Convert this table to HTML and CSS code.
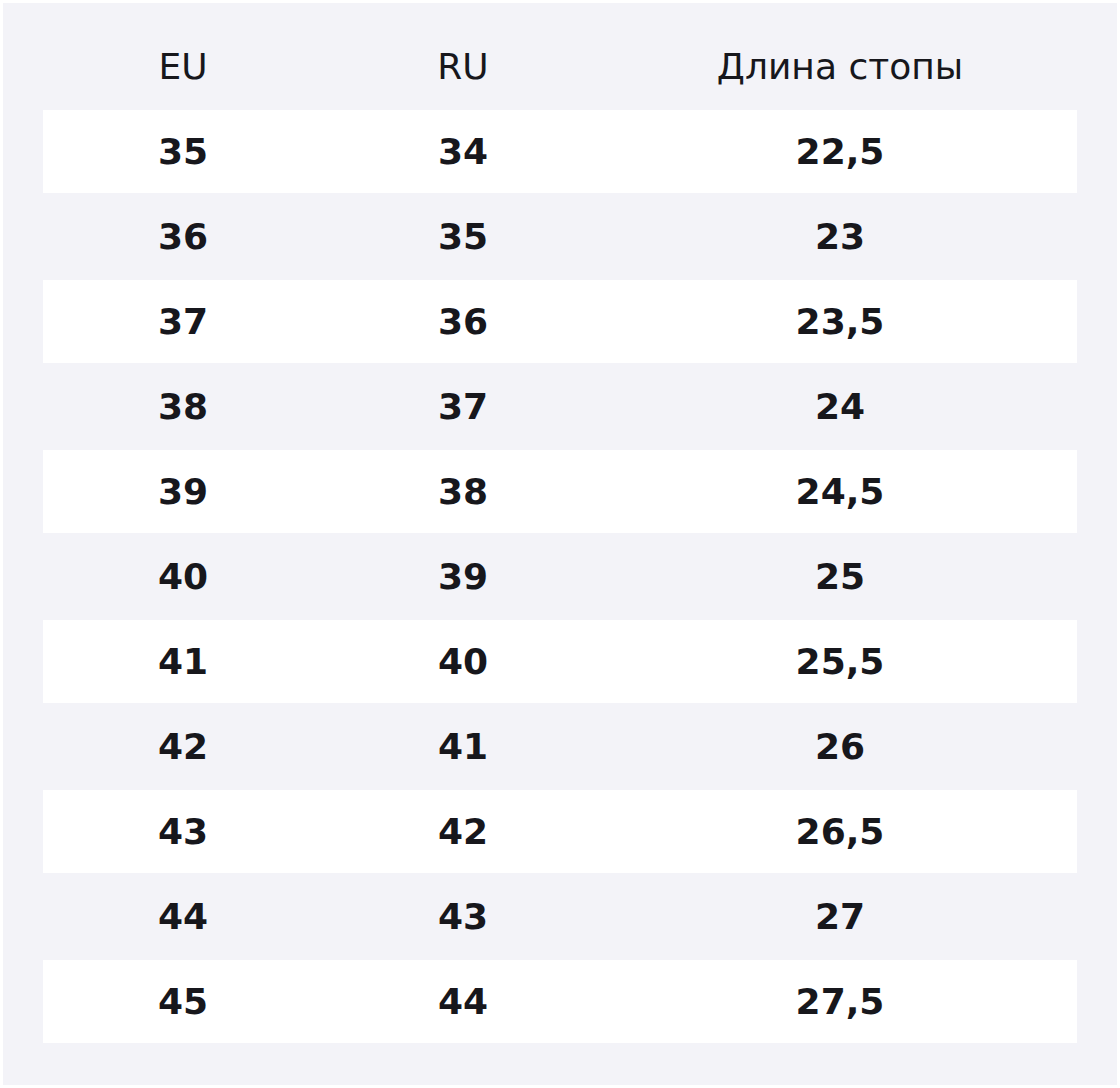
FILE: index.html
```html
<!DOCTYPE html>
<html lang="ru">
<head>
<meta charset="utf-8">
<link rel="stylesheet" href="styles.css">
</head>
<body>
<div class="panel">
  <div class="head">
    <div class="cell">EU</div>
    <div class="cell">RU</div>
    <div class="cell">Длина стопы</div>
  </div>
  <div class="rows">
    <div class="row odd"><div class="cell">35</div><div class="cell">34</div><div class="cell">22,5</div></div>
    <div class="row"><div class="cell">36</div><div class="cell">35</div><div class="cell">23</div></div>
    <div class="row odd"><div class="cell">37</div><div class="cell">36</div><div class="cell">23,5</div></div>
    <div class="row"><div class="cell">38</div><div class="cell">37</div><div class="cell">24</div></div>
    <div class="row odd"><div class="cell">39</div><div class="cell">38</div><div class="cell">24,5</div></div>
    <div class="row"><div class="cell">40</div><div class="cell">39</div><div class="cell">25</div></div>
    <div class="row odd"><div class="cell">41</div><div class="cell">40</div><div class="cell">25,5</div></div>
    <div class="row"><div class="cell">42</div><div class="cell">41</div><div class="cell">26</div></div>
    <div class="row odd"><div class="cell">43</div><div class="cell">42</div><div class="cell">26,5</div></div>
    <div class="row"><div class="cell">44</div><div class="cell">43</div><div class="cell">27</div></div>
    <div class="row odd"><div class="cell">45</div><div class="cell">44</div><div class="cell">27,5</div></div>
  </div>
</div>
</body>
</html>
```
FILE: styles.css
```css
html, body {
  margin: 0;
  padding: 0;
  background: #ffffff;
}
body {
  padding: 3px;
  font-family: "DejaVu Sans", Verdana, sans-serif;
  color: #17171c;
}
.panel {
  background: #f3f3f8;
  height: 1082px;
  box-sizing: border-box;
  padding: 40px 40px 42px 40px;
}
.head, .row {
  display: grid;
  grid-template-columns: 280px 280px 1fr;
  align-items: center;
}
.head {
  height: 48px;
  margin-bottom: 19px;
  font-size: 36px;
  font-weight: 400;
}
.rows {
  display: flex;
  flex-direction: column;
  gap: 2px;
}
.row {
  height: 83px;
  font-size: 36px;
  font-weight: 700;
}
.row.odd {
  background: #ffffff;
}
.cell {
  text-align: center;
  line-height: 1;
}
```
